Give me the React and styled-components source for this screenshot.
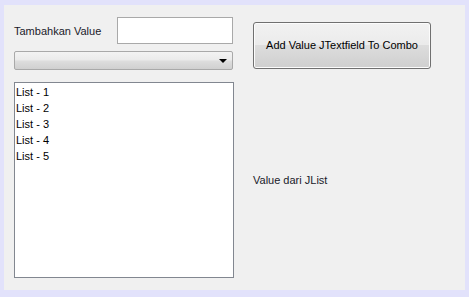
import React from 'react'
import styled, { createGlobalStyle } from 'styled-components'

const GlobalStyle = createGlobalStyle`
  html, body {
    margin: 0;
    padding: 0;
    background: #e2e2fb;
  }
  body {
    font-family: "Liberation Sans", Arial, sans-serif;
    font-size: 11px;
    color: #000;
  }
`

const Frame = styled.div`
  width: 469px;
  height: 297px;
  box-sizing: border-box;
  padding: 5px 4px 7px 4px;
  background: #e2e2fb;
`

const Panel = styled.div`
  display: flex;
  height: 100%;
  box-sizing: border-box;
  padding: 12px 0 0 10px;
  background: #f0f0f0;
`

const LeftColumn = styled.div`
  display: flex;
  flex-direction: column;
  width: 220px;
`

const InputRow = styled.div`
  display: flex;
  align-items: center;
  justify-content: space-between;
  height: 27px;
`

const Label = styled.span`
  color: #1a1a2a;
  white-space: nowrap;
`

const TextField = styled.input`
  width: 116px;
  height: 27px;
  box-sizing: border-box;
  border: 1px solid #a9a9a9;
  background: #fff;
  margin: 0 1px 0 0;
  padding: 0 3px;
  font: inherit;
  outline: none;
`

const Combo = styled.div`
  position: relative;
  margin-top: 7px;
  height: 19px;
  width: 219px;
  box-sizing: border-box;
  border: 1px solid #a9a9a9;
  border-radius: 2px;
  background: linear-gradient(#f3f3f3 0%, #ebebeb 45%, #dddddd 55%, #d0d0d0 100%);
`

const Arrow = styled.span`
  position: absolute;
  right: 5px;
  top: 7px;
  width: 0;
  height: 0;
  border-left: 4px solid transparent;
  border-right: 4px solid transparent;
  border-top: 4px solid #000;
`

const ListBox = styled.ul`
  list-style: none;
  margin: 12px 0 0 0;
  padding: 1px 0 0 1px;
  height: 196px;
  width: 220px;
  box-sizing: border-box;
  border: 1px solid #828790;
  background: #fff;
`

const ListItem = styled.li`
  height: 16px;
  line-height: 16px;
  color: #000;
`

const RightColumn = styled.div`
  display: flex;
  flex-direction: column;
  align-items: flex-start;
  margin-left: 19px;
`

const Button = styled.button`
  margin-top: 5px;
  width: 178px;
  height: 47px;
  border: 1px solid #707070;
  border-radius: 3px;
  background: linear-gradient(#f2f2f2 0%, #ebebeb 48%, #dddddd 50%, #cfcfcf 100%);
  box-shadow: inset 0 0 0 1px #fcfcfc;
  font: inherit;
  color: #000;
  padding: 0 0 2px 0;
`

const Caption = styled.span`
  margin-top: 105px;
  color: #1a1a2a;
`

const items = ['List - 1', 'List - 2', 'List - 3', 'List - 4', 'List - 5']

export default function App() {
  return (
    <Frame>
      <GlobalStyle />
      <Panel>
        <LeftColumn>
          <InputRow>
            <Label>Tambahkan Value</Label>
            <TextField />
          </InputRow>
          <Combo>
            <Arrow />
          </Combo>
          <ListBox>
            {items.map((item) => (
              <ListItem key={item}>{item}</ListItem>
            ))}
          </ListBox>
        </LeftColumn>
        <RightColumn>
          <Button>Add Value JTextfield To Combo</Button>
          <Caption>Value dari JList</Caption>
        </RightColumn>
      </Panel>
    </Frame>
  )
}
